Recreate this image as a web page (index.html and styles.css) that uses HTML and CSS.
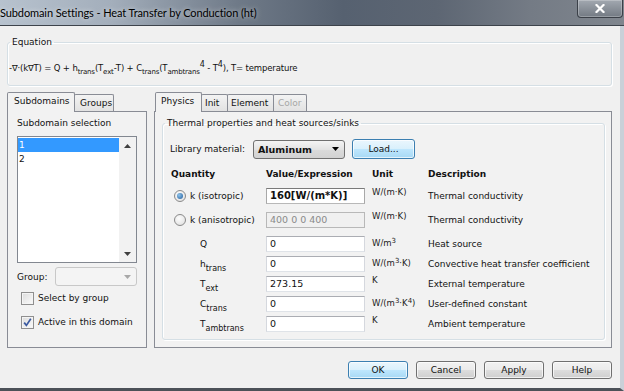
FILE: index.html
```html
<!DOCTYPE html>
<html lang="en">
<head>
<meta charset="utf-8">
<title>Subdomain Settings</title>
<link rel="stylesheet" href="styles.css">
</head>
<body>
<div class="window">
  <header class="titlebar">
    <span class="title">Subdomain Settings - Heat Transfer by Conduction (ht)</span>
    <div class="close"><svg width="10" height="9" viewBox="0 0 10 9"><path d="M1.5 1 L8.5 8 M8.5 1 L1.5 8" stroke="#fff" stroke-width="2.2" stroke-linecap="square"/></svg></div>
  </header>
  <div class="client">
    <fieldset class="group eq">
      <legend>Equation</legend>
      <div class="equation">-∇·(k∇T) = Q + h<sub>trans</sub>(T<sub>ext</sub>-T) + C<sub>trans</sub>(T<sub>ambtrans</sub><sup>4</sup> - T<sup>4</sup>), T= temperature</div>
    </fieldset>
    <div class="main">
      <section class="tabctl left">
        <div class="tabs">
          <div class="tab sel t-sub">Subdomains</div>
          <div class="tab t-grp">Groups</div>
        </div>
        <div class="page page-left">
          <div class="lbl">Subdomain selection</div>
          <div class="listbox">
            <div class="items">
              <div class="item selected">1</div>
              <div class="item">2</div>
            </div>
            <div class="vscroll">
              <div class="sbtn"><svg width="7" height="4" viewBox="0 0 7 4"><path d="M0 4 L3.5 0 L7 4 Z" fill="#404040"/></svg></div>
              <div class="strack"></div>
              <div class="sbtn"><svg width="7" height="4" viewBox="0 0 7 4"><path d="M0 0 L7 0 L3.5 4 Z" fill="#404040"/></svg></div>
            </div>
          </div>
          <div class="grouprow">
            <span class="grouplbl">Group:</span>
            <div class="combo disabled"><svg width="7" height="4" viewBox="0 0 7 4"><path d="M0 0 L7 0 L3.5 4 Z" fill="#a8a8a8"/></svg></div>
          </div>
          <div class="check"><span class="cbox"></span><span>Select by group</span></div>
          <div class="check"><span class="cbox"><svg width="11" height="11" viewBox="0 0 11 11"><path d="M2.2 5.6 L4.4 8.4 L8.8 1.8" fill="none" stroke="#3b5aa0" stroke-width="1.7"/></svg></span><span>Active in this domain</span></div>
        </div>
      </section>
      <section class="tabctl right">
        <div class="tabs tabs-right">
          <div class="tab sel t-phys">Physics</div>
          <div class="tab t-init">Init</div>
          <div class="tab t-elem">Element</div>
          <div class="tab dis t-color">Color</div>
        </div>
        <div class="page page-right">
          <fieldset class="group thermal">
            <legend>Thermal properties and heat sources/sinks</legend>
            <div class="librow">
              <span class="liblabel">Library material:</span>
              <div class="combo mat"><span class="matname">Aluminum</span><svg width="7" height="4" viewBox="0 0 7 4"><path d="M0 0 L7 0 L3.5 4 Z" fill="#000"/></svg></div>
              <div class="btn load">Load...</div>
            </div>
            <div class="grid">
              <div class="hd">Quantity</div>
              <div class="hd">Value/Expression</div>
              <div class="hd">Unit</div>
              <div class="hd">Description</div>

              <div class="q"><span class="radio on"></span><span>k (isotropic)</span></div>
              <div class="v"><div class="input bold">160[W/(m*K)]</div></div>
              <div class="u top">W/(m·K)</div>
              <div class="d">Thermal conductivity</div>

              <div class="q"><span class="radio"></span><span>k (anisotropic)</span></div>
              <div class="v"><div class="input off">400 0 0 400</div></div>
              <div class="u top">W/(m·K)</div>
              <div class="d">Thermal conductivity</div>

              <div class="q ind"><span>Q</span></div>
              <div class="v"><div class="input">0</div></div>
              <div class="u">W/m<sup>3</sup></div>
              <div class="d">Heat source</div>

              <div class="q ind"><span>h<sub>trans</sub></span></div>
              <div class="v"><div class="input">0</div></div>
              <div class="u">W/(m<sup>3</sup>·K)</div>
              <div class="d">Convective heat transfer coefficient</div>

              <div class="q ind"><span>T<sub>ext</sub></span></div>
              <div class="v"><div class="input">273.15</div></div>
              <div class="u top">K</div>
              <div class="d">External temperature</div>

              <div class="q ind"><span>C<sub>trans</sub></span></div>
              <div class="v"><div class="input">0</div></div>
              <div class="u">W/(m<sup>3</sup>·K<sup>4</sup>)</div>
              <div class="d">User-defined constant</div>

              <div class="q ind"><span>T<sub>ambtrans</sub></span></div>
              <div class="v"><div class="input">0</div></div>
              <div class="u top">K</div>
              <div class="d">Ambient temperature</div>
            </div>
          </fieldset>
        </div>
      </section>
    </div>
    <div class="buttons">
      <div class="btn def">OK</div>
      <div class="btn">Cancel</div>
      <div class="btn">Apply</div>
      <div class="btn">Help</div>
    </div>
  </div>
</div>
</body>
</html>
```

FILE: styles.css
```css
* { box-sizing: border-box; }
html, body { margin: 0; padding: 0; }
body {
  width: 624px; height: 391px; overflow: hidden;
  font-family: "DejaVu Sans", sans-serif; font-size: 9px; color: #111;
  background: #f0f0f0;
}
.window { width: 624px; height: 391px; display: flex; flex-direction: column; }

/* title bar */
.titlebar {
  height: 26px; flex: none; display: flex; justify-content: space-between; align-items: flex-start;
  background: linear-gradient(90deg, #b7c2ce 0%, #a3aebb 18%, #6f7a88 38%, #566170 55%, #5d6673 70%, #747b85 85%, #80868e 100%);
  border-bottom: 1px solid #3d434b;
}
.title {
  font-family: "Lato", sans-serif; font-size: 11px; line-height: 25px; color: #000; white-space: nowrap;
  letter-spacing: -0.1px;
  text-shadow: 0 0 5px rgba(255,255,255,.7);
}
.close {
  width: 46px; height: 18px; margin-right: 1px;
  border: 1px solid #3b4048; border-top: none; border-radius: 0 0 4px 4px;
  background: linear-gradient(#a2a8b0, #737a83);
  box-shadow: inset 0 0 0 1px rgba(255,255,255,.25);
  display: flex; align-items: center; justify-content: center;
}

/* client area */
.client {
  flex: 1; display: flex; flex-direction: column;
  padding: 10px 8px 0 7px;
  background: #f0f0f0;
  border-right: 4px solid #c9d0d8;
  border-bottom: 3px solid #4c5158;
}

fieldset.group {
  margin: 0; min-width: 0;
  border: 1px solid #d5dfe5; border-radius: 3px;
  box-shadow: inset 1px 1px 0 #fff, 1px 1px 0 #fff;
}
fieldset.group legend { padding: 0 2px; line-height: 13px; }

.eq { margin: 0 1px; padding: 12px 0 10px 1px; }
.eq legend { margin-left: 1px; }
.equation { line-height: 14px; white-space: nowrap; font-size: 8.5px; letter-spacing: -0.15px; }
.equation sub { font-size: 7px; vertical-align: -3px; line-height: 0; }
.equation sup { font-size: 8px; vertical-align: 4px; line-height: 0; }

/* tabs */
.main { display: flex; gap: 7px; margin-top: 6px; }
.tabctl { display: flex; flex-direction: column; }
.left { width: 140px; }
.right { width: 458px; }
.tabs { display: flex; height: 19px; align-items: flex-end; position: relative; z-index: 1; }
.tabs-right { padding-left: 1px; }
.tab {
  height: 17px; padding-top: 2px; line-height: 13px; margin-right: -1px;
  border: 1px solid #898c95; border-bottom: none; border-radius: 2px 2px 0 0;
  background: linear-gradient(#f3f3f3, #e2e2e2);
  white-space: nowrap;
}
.tab.sel { height: 20px; margin-bottom: -1px; background: #f2f2f2; }
.tab.dis { color: #a6a6a6; }
.t-sub { width: 68px; padding-left: 6px; }
.t-grp { width: 40px; padding-left: 5px; }
.t-phys { width: 47px; padding-left: 5px; }
.t-init { width: 27px; padding-left: 3px; }
.t-elem { width: 47px; padding-left: 3px; }
.t-color { width: 34px; padding-left: 4px; }

.page { height: 237px; border: 1px solid #898c95; background: #f2f2f2; }

/* left page */
.page-left { padding: 5px 9px 0 9px; display: flex; flex-direction: column; }
.lbl { line-height: 12px; }
.listbox {
  margin-top: 7px; height: 127px; width: 120px;
  border: 1px solid #828790; background: #fff; display: flex;
}
.items { flex: 1; padding-top: 1px; }
.item { height: 14px; line-height: 14px; padding-left: 1px; }
.item.selected { background: #3399ff; color: #fff; }
.vscroll { width: 17px; display: flex; flex-direction: column; background: #f2f2f2; }
.sbtn { height: 17px; display: flex; align-items: center; justify-content: center; }
.strack { flex: 1; }
.grouprow { margin-top: 4px; height: 19px; display: flex; align-items: center; }
.grouplbl { width: 38px; }
.combo {
  height: 19px; display: flex; align-items: center; justify-content: space-between;
  border: 1px solid #707070; border-radius: 3px;
  background: linear-gradient(#f4f4f4, #e3e3e3 50%, #dadada 51%, #d2d2d2);
}
.combo.disabled {
  width: 82px; justify-content: flex-end; padding-right: 5px;
  border-color: #c8c8c8; background: #f4f4f4;
}
.check { height: 24px; display: flex; align-items: center; padding-left: 4px; gap: 4px; }
.check:first-of-type { margin-top: 2px; }
.cbox {
  width: 13px; height: 13px; border: 1px solid #8f8f8f;
  background: linear-gradient(135deg, #dcdcdc, #fbfbfb);
  box-shadow: inset 0 0 0 1px #f4f4f4;
  display: flex; align-items: center; justify-content: center;
}

/* right page */
.page-right { padding: 5px 6px 0 7px; }
.thermal { padding: 9px 5px 5px 7px; }
.thermal legend { margin-left: -5px; }
.librow { height: 20px; display: flex; align-items: center; }
.liblabel { width: 83px; }
.combo.mat { width: 92px; padding: 0 5px 0 4px; }
.matname { font-weight: bold; font-size: 9.5px; }
.btn {
  height: 20px; display: flex; align-items: center; justify-content: center;
  border: 1px solid #707070; border-radius: 3px;
  background: linear-gradient(#f2f2f2, #ebebeb 50%, #dddddd 51%, #cfcfcf);
  box-shadow: inset 0 0 0 1px rgba(255,255,255,.7);
}
.btn.load {
  width: 63px; margin-left: 7px;
  border-color: #3c7fb1;
  background: linear-gradient(#eaf6fd, #d9f0fc 50%, #bee6fd 51%, #a7d9f5);
}

.grid {
  margin: 9px 0 0 1px;
  display: grid;
  grid-template-columns: 95px 106px 56px 1fr;
  grid-template-rows: 18px 24px 24px repeat(5, 20px);
  align-items: start;
}
.hd { font-weight: bold; line-height: 13px; }
.q, .d { margin-top: 2px; height: 16px; line-height: 16px; display: flex; align-items: center; white-space: nowrap; }
.q.ind { padding-left: 29px; }
.q sub { font-size: 8px; vertical-align: -4px; line-height: 0; }
.u { margin-top: 3px; line-height: 13px; white-space: nowrap; font-size: 8.5px; color: #222; }
.u.top { margin-top: 0; }
.u sup { font-size: 7px; vertical-align: 3px; line-height: 0; }
.v { margin-top: 2px; }
.input {
  width: 99px; height: 16px; line-height: 14px; padding-left: 3px;
  border: 1px solid #abadb3; border-color: #abadb3 #d5d8de #dfe3e8 #d5d8de; background: #fff;
  font-size: 9.5px; white-space: nowrap; overflow: hidden;
}
.input.bold { font-weight: bold; font-size: 10px; border-color: #7a7a7a #a8a8a8 #b8b8b8 #a8a8a8; }
.input.off { background: #f0f0f0; color: #8a8a8a; border-color: #b8b8b8; }
.radio {
  width: 12px; height: 12px; border-radius: 50%; margin: 0 4px 0 3px; flex: none;
  border: 1px solid #8a8a8a;
  background: radial-gradient(circle at 40% 35%, #fdfdfd, #dcdcdc);
  display: flex; align-items: center; justify-content: center;
}
.radio.on::after {
  content: ""; width: 6px; height: 6px; border-radius: 50%;
  background: radial-gradient(circle at 35% 35%, #8fc3ea, #1f5c9c);
}

/* dialog buttons */
.buttons { display: flex; justify-content: flex-end; gap: 8px; margin-top: 13px; }
.buttons .btn { width: 60px; height: 18px; }
.btn.def {
  border-color: #3c7fb1;
  background: linear-gradient(#eaf6fd, #d9f0fc 50%, #bee6fd 51%, #a7d9f5);
}
```
